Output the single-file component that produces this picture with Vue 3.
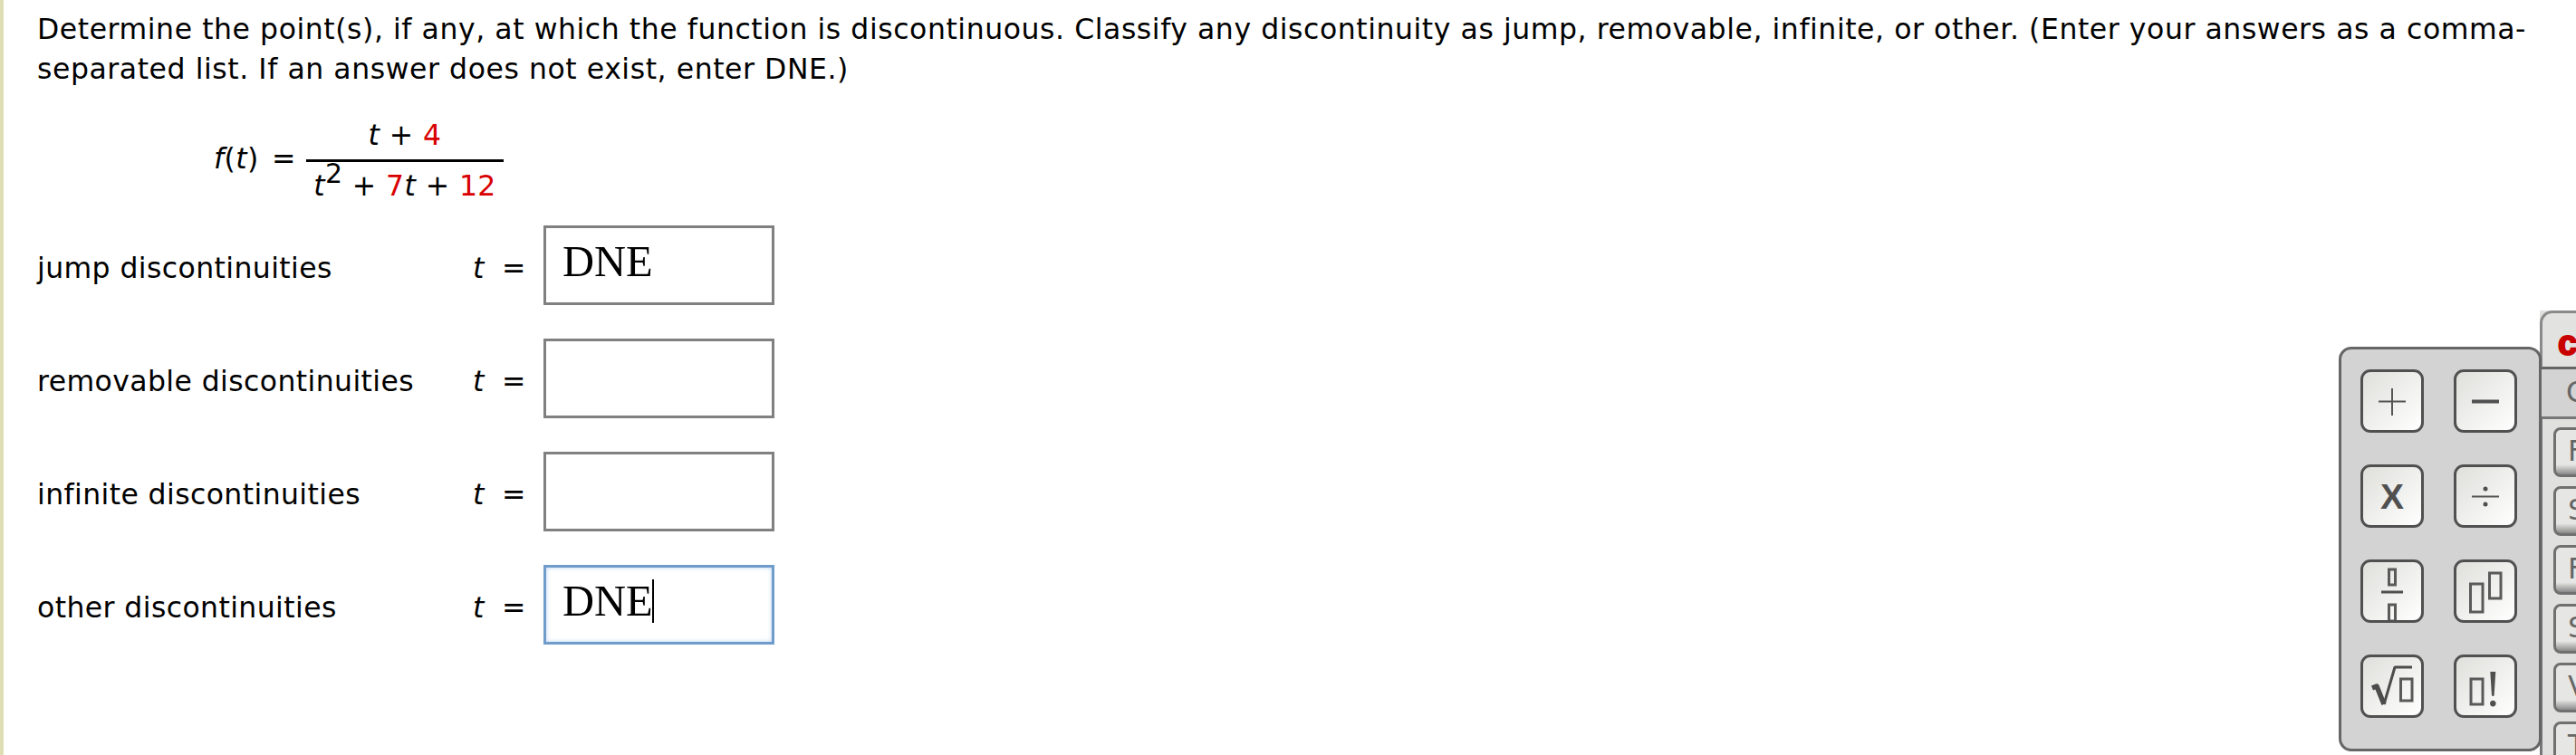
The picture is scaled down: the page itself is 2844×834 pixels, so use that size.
<script setup>
const rows = [
  { label: 'jump discontinuities', value: 'DNE' },
  { label: 'removable discontinuities', value: '' },
  { label: 'infinite discontinuities', value: '' },
  { label: 'other discontinuities', value: 'DNE', focus: true }
]
const sideKeys = ['F', 'S', 'F', 'S', 'V', 'T']
</script>

<template>
  <div class="page">
    <main class="question">
      <p class="prompt">Determine the point(s), if any, at which the function is discontinuous. Classify any discontinuity as jump, removable, infinite, or other. (Enter your answers as a comma-separated list. If an answer does not exist, enter DNE.)</p>

      <div class="formula">
        <span class="lhs"><i>f</i>(<i>t</i>)</span>
        <span class="eq">=</span>
        <div class="fraction">
          <div class="num"><i>t</i> + <span class="red">4</span></div>
          <div class="den"><i>t</i><sup>2</sup> + <span class="red">7</span><i>t</i> + <span class="red">12</span></div>
        </div>
      </div>

      <div class="answers">
        <div v-for="row in rows" :key="row.label" class="row">
          <span class="label">{{ row.label }}</span>
          <span class="var"><i>t</i></span>
          <span class="equals">=</span>
          <div class="field" :class="{ focus: row.focus }">
            <span class="value">{{ row.value }}</span><span v-if="row.focus" class="caret"></span>
          </div>
        </div>
      </div>
    </main>

    <aside class="palette">
      <div class="key"><svg viewBox="0 0 64 64"><path d="M32 18v30M17 32.500h30" class="thin" /></svg></div>
      <div class="key"><svg viewBox="0 0 64 64"><path d="M17 32.500h30" class="bar" /></svg></div>
      <div class="key"><span class="x">X</span></div>
      <div class="key"><svg viewBox="0 0 64 64"><path d="M17 32.500h30" class="thin" /><circle cx="32" cy="24" r="2.500" class="dot" /><circle cx="32" cy="41" r="2.500" class="dot" /></svg></div>
      <div class="key"><svg viewBox="0 0 64 64"><rect x="28.500" y="8" width="7" height="17" class="box" /><path d="M20 33h24" class="rule" /><rect x="28.500" y="47" width="7" height="18" class="box" /></svg></div>
      <div class="key"><svg viewBox="0 0 64 64"><rect x="15.500" y="24" width="13.500" height="31" class="box" /><rect x="36.500" y="12" width="12.500" height="28" class="box" /></svg></div>
      <div class="key"><svg viewBox="0 0 64 64"><path d="M10 34l5-2 8 20" class="root-heavy" /><path d="M23 52L35 11h19" class="root" /><rect x="41.500" y="24" width="12.500" height="24" class="box" /></svg></div>
      <div class="key"><svg viewBox="0 0 64 64"><rect x="16" y="24" width="13" height="28" class="box" /></svg><span class="bang">!</span></div>
    </aside>

    <aside class="drawer">
      <div class="drawer-title"><span class="brand">c</span></div>
      <div class="drawer-tab">C</div>
      <div class="drawer-keys">
        <div v-for="(k, i) in sideKeys" :key="i" class="side-key">{{ k }}</div>
      </div>
    </aside>
  </div>
</template>

<style scoped>
.page {
  position: relative;
  box-sizing: border-box;
  width: 2844px;
  height: 834px;
  overflow: hidden;
  border-left: 4px solid #dedeb4;
  background: #fff;
  color: #000;
  font-family: "DejaVu Sans", Verdana, sans-serif;
  font-size: 31.500px;
  letter-spacing: 0.400px;
}
.question { padding: 10px 0 0 37px; }
.prompt {
  margin: 0;
  width: 2780px;
  line-height: 44px;
  letter-spacing: 0.560px;
}
.formula {
  display: flex;
  align-items: flex-start;
  margin: 36px 0 0 195px;
  line-height: 1;
}
.lhs { width: 64px; margin-top: 26px; }
.eq { width: 38px; margin-top: 26px; }
.red { color: #d80000; }
.fraction { display: flex; flex-direction: column; align-items: stretch; width: 218px; }
.num { text-align: center; padding-bottom: 10px; border-bottom: 3px solid #000; }
.den { text-align: center; padding-top: 11px; white-space: nowrap; }
sup { font-size: 30px; line-height: 0; vertical-align: 14px; }
.answers {
  display: flex;
  flex-direction: column;
  gap: 37px;
  margin-top: 28px;
}
.row { display: flex; align-items: center; height: 88px; }
.label { width: 481px; position: relative; top: 3px; }
.var { width: 32px; position: relative; top: 3px; }
.equals { width: 46px; position: relative; top: 3px; }
.field {
  box-sizing: border-box;
  width: 255px;
  height: 88px;
  border: 3.500px solid #808080;
  background: #fff;
  padding: 0 0 8px 18px;
  display: flex;
  align-items: center;
  font-family: "Liberation Serif", "Times New Roman", serif;
  font-size: 48.500px;
  letter-spacing: 0;
  line-height: 1;
}
.field.focus {
  border-color: #6f9ccb;
  box-shadow: inset 0 0 5px #bcd6f0;
}
.caret { display: inline-block; width: 2px; height: 48px; background: #000; margin-left: -1px; }

.palette {
  position: absolute;
  left: 2578px;
  top: 383px;
  box-sizing: border-box;
  width: 224px;
  height: 447px;
  padding: 22px 21px;
  border: 3px solid #666;
  border-radius: 14px;
  background: #d3d3d3;
  z-index: 2;
  display: grid;
  grid-template-columns: 70px 70px;
  grid-auto-rows: 70px;
  column-gap: 33px;
  row-gap: 35px;
  letter-spacing: 0;
}
.key {
  position: relative;
  box-sizing: border-box;
  display: flex;
  align-items: center;
  justify-content: center;
  border: 3px solid #505050;
  border-radius: 11px;
  background: linear-gradient(135deg, #dfdfdb, #fff);
  color: #505050;
  overflow: hidden;
}
.key svg { width: 64px; height: 64px; display: block; position: absolute; left: 0; top: 0; }
.thin { stroke: #555; stroke-width: 2; fill: none; }
.bar { stroke: #505050; stroke-width: 4; fill: none; }
.rule { stroke: #505050; stroke-width: 3; fill: none; }
.dot { fill: #505050; }
.box { fill: none; stroke: #5a5a5a; stroke-width: 3; }
.root { fill: none; stroke: #4c4c4c; stroke-width: 3; stroke-linejoin: bevel; }
.root-heavy { fill: none; stroke: #4c4c4c; stroke-width: 5.500; stroke-linejoin: round; }
.x { font-family: "Liberation Sans", Arial, sans-serif; font-weight: bold; font-size: 39px; line-height: 1; }
.bang {
  position: absolute;
  left: 31px;
  top: 7px;
  font-family: "Liberation Serif", serif;
  font-size: 56px;
  line-height: 1;
  color: #505050;
}

.drawer {
  position: absolute;
  left: 2800px;
  top: 343px;
  width: 60px;
  height: 491px;
  display: flex;
  flex-direction: column;
  background: #e0e0de;
  letter-spacing: 0;
}
.drawer-title {
  flex: none;
  box-sizing: border-box;
  height: 65px;
  padding: 14px 0 0 17px;
  border: 3px solid #8a8a8a;
  border-right: 0;
  border-bottom: 3px solid #666;
  border-top-left-radius: 14px;
  background: #e2e2e0;
  font-size: 38px;
  line-height: 1;
}
.brand {
  color: #c90000;
  font-family: "Liberation Sans", Arial, sans-serif;
  font-weight: bold;
  -webkit-text-stroke: 2px #c90000;
}
.drawer-tab {
  box-sizing: border-box;
  flex: none;
  height: 55px;
  padding: 10px 0 0 28px;
  background: #d3d3d3;
  border-bottom: 3px solid #777;
  border-left: 1px solid #999;
  color: #666;
  line-height: 1;
}
.drawer-keys {
  flex: 1;
  min-height: 0;
  display: flex;
  flex-direction: column;
  gap: 10px;
  padding: 9px 0 0 12px;
  border-left: 3px solid #777;
}
.side-key {
  flex: none;
  box-sizing: border-box;
  width: 60px;
  height: 55px;
  padding: 8px 0 0 13px;
  border: 3px solid #707070;
  border-radius: 8px;
  background: linear-gradient(180deg, #e6e6e4 0, #e6e6e4 78%, #8a8a8a 100%);
  color: #666;
  line-height: 1;
}
</style>

<style>
html, body { margin: 0; background: #fff; }
</style>
